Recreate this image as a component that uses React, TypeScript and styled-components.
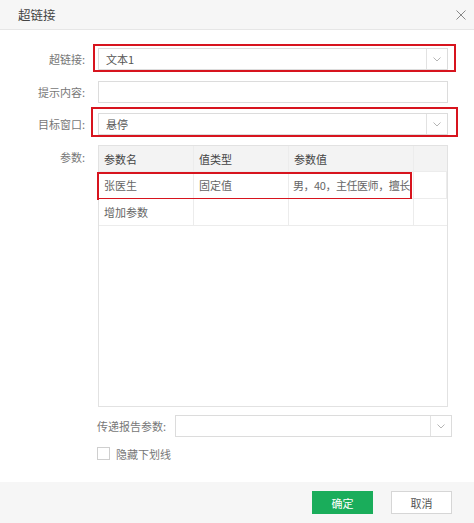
import styled, { createGlobalStyle } from "styled-components";

const GlobalStyle = createGlobalStyle`
  html, body {
    margin: 0;
    padding: 0;
    background: #ffffff;
  }
  body {
    font-family: "Noto Sans CJK SC", "Noto Sans", sans-serif;
    font-size: 11px;
    color: #555;
  }
`;

const Dialog = styled.div`
  width: 474px;
  height: 523px;
  display: flex;
  flex-direction: column;
  background: #fff;
`;

const Header = styled.div`
  height: 30px;
  box-sizing: border-box;
  display: flex;
  align-items: center;
  justify-content: space-between;
  padding: 0 8px 0 18px;
  background: #f6f6f6;
  border-bottom: 1px solid #e6e6e6;
  font-size: 12.5px;
  color: #444;
`;

const Close = styled.span`
  display: flex;
  width: 10px;
  height: 10px;
`;

const Body = styled.div`
  flex: 1;
  display: flex;
  flex-direction: column;
  padding: 18px 26px 0 0;
`;

const Row = styled.div<{ $top?: number }>`
  display: flex;
  align-items: center;
  margin-top: ${(p) => p.$top ?? 0}px;
`;

const Label = styled.div<{ $start?: boolean }>`
  width: 85px;
  flex-shrink: 0;
  margin-right: 13px;
  text-align: right;
  color: #777;
  align-self: ${(p) => (p.$start ? "flex-start" : "center")};
  padding-top: ${(p) => (p.$start ? "4px" : "0")};
`;

const Field = styled.div`
  position: relative;
  flex: 1;
  height: 22px;
  box-sizing: border-box;
  border: 1px solid #dcdcdc;
  display: flex;
  align-items: center;
  background: #fff;
`;

const FieldText = styled.span`
  flex: 1;
  padding-left: 7px;
  color: #555;
`;

const Arrow = styled.span`
  width: 20px;
  height: 100%;
  border-left: 1px solid #e2e2e2;
  display: flex;
  align-items: center;
  justify-content: center;
`;

const Highlight = styled.div<{ $inset: string }>`
  position: absolute;
  inset: ${(p) => p.$inset};
  border: 2px solid #d7141e;
  pointer-events: none;
`;

const Table = styled.div`
  flex: 1;
  height: 262px;
  box-sizing: border-box;
  border: 1px solid #e2e2e2;
  display: flex;
  flex-direction: column;
`;

const TRow = styled.div<{ $head?: boolean }>`
  position: relative;
  display: grid;
  grid-template-columns: 95px 95px 125px 1fr;
  height: ${(p) => (p.$head ? "25px" : "26px")};
  background: ${(p) => (p.$head ? "#f3f3f3" : "#fff")};
  border-bottom: 1px solid #ececec;
`;

const Cell = styled.div<{ $head?: boolean; $tight?: boolean }>`
  display: flex;
  align-items: center;
  padding-left: ${(p) => (p.$tight ? "4px" : "5px")};
  letter-spacing: ${(p) => (p.$tight ? "-0.45px" : "normal")};
  border-right: 1px solid #ececec;
  color: ${(p) => (p.$head ? "#444" : "#666")};
  white-space: nowrap;
  overflow: hidden;

  &:last-child {
    border-right: none;
  }
`;

const Bottom = styled.div`
  display: flex;
  flex-direction: column;
  padding-left: 97px;
  margin-top: 8px;
`;

const PassLabel = styled.span`
  width: 78px;
  color: #777;
`;

const CheckRow = styled.label`
  display: flex;
  align-items: center;
  gap: 6px;
  height: 13px;
  margin-top: 10px;
  color: #777;
`;

const Box = styled.span`
  width: 11px;
  height: 11px;
  border: 1px solid #cfcfcf;
  background: #fff;
`;

const Footer = styled.div`
  height: 41px;
  display: flex;
  align-items: center;
  justify-content: flex-end;
  gap: 18px;
  padding-right: 22px;
  background: #f6f6f6;
`;

const Button = styled.button<{ $primary?: boolean }>`
  width: 61px;
  height: 23px;
  box-sizing: border-box;
  font-family: inherit;
  font-size: 11px;
  border: 1px solid ${(p) => (p.$primary ? "#1aad5b" : "#d6d6d6")};
  background: ${(p) => (p.$primary ? "#1aad5b" : "#fff")};
  color: ${(p) => (p.$primary ? "#fff" : "#555")};
  padding: 0;
`;

const Chevron = () => (
  <svg width="8" height="5" viewBox="0 0 8 5">
    <path d="M0.5 0.5 L4 4 L7.5 0.5" fill="none" stroke="#b5b5b5" strokeWidth="1" />
  </svg>
);

const App = () => {
  return (
    <Dialog>
      <GlobalStyle />
      <Header>
        超链接
        <Close>
          <svg width="10" height="10" viewBox="0 0 10 10">
            <path d="M0.5 0.5 L9.5 9.5 M9.5 0.5 L0.5 9.5" stroke="#888" strokeWidth="1" />
          </svg>
        </Close>
      </Header>
      <Body>
        <Row>
          <Label>超链接:</Label>
          <Field>
            <FieldText>文本1</FieldText>
            <Arrow>
              <Chevron />
            </Arrow>
            <Highlight $inset="-5px -9px -3px -6px" />
          </Field>
        </Row>
        <Row $top={11}>
          <Label>提示内容:</Label>
          <Field />
        </Row>
        <Row $top={10}>
          <Label>目标窗口:</Label>
          <Field>
            <FieldText>悬停</FieldText>
            <Arrow>
              <Chevron />
            </Arrow>
            <Highlight $inset="-7px -11px -3px -8px" />
          </Field>
        </Row>
        <Row $top={10}>
          <Label $start>参数:</Label>
          <Table>
            <TRow $head>
              <Cell $head>参数名</Cell>
              <Cell $head>值类型</Cell>
              <Cell $head>参数值</Cell>
              <Cell />
            </TRow>
            <TRow>
              <Cell>张医生</Cell>
              <Cell>固定值</Cell>
              <Cell $tight>男，40，主任医师，擅长</Cell>
              <Cell />
              <Highlight $inset="0px 35px -2px -2px" />
            </TRow>
            <TRow>
              <Cell>增加参数</Cell>
              <Cell />
              <Cell />
              <Cell />
            </TRow>
          </Table>
        </Row>
        <Bottom>
          <Row>
            <PassLabel>传递报告参数:</PassLabel>
            <Field style={{ marginRight: "-4px" }}>
              <FieldText />
              <Arrow>
                <Chevron />
              </Arrow>
            </Field>
          </Row>
          <CheckRow>
            <Box />
            隐藏下划线
          </CheckRow>
        </Bottom>
      </Body>
      <Footer>
        <Button $primary>确定</Button>
        <Button>取消</Button>
      </Footer>
    </Dialog>
  );
};

export default App;
